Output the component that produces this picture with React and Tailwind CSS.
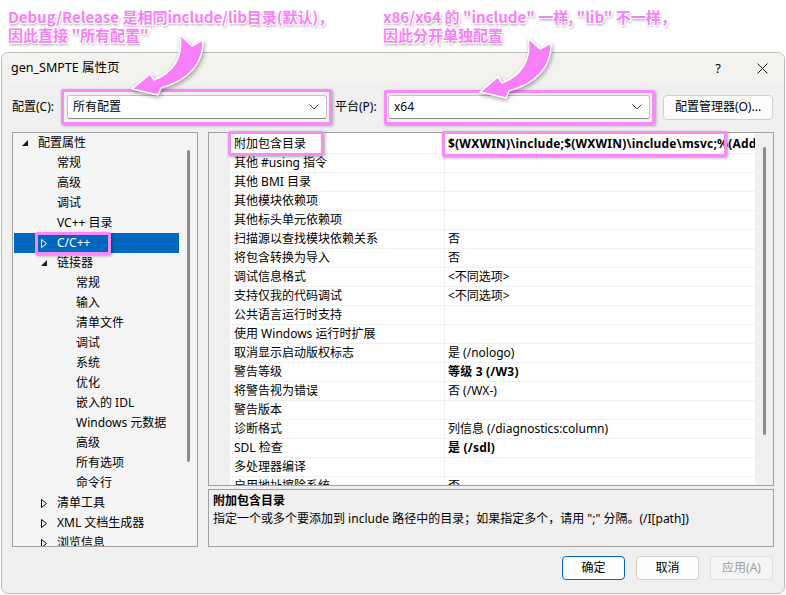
const tree = [
    { t: '配置属性', l: 0, s: 'open' },
    { t: '常规', l: 1 },
    { t: '高级', l: 1 },
    { t: '调试', l: 1 },
    { t: 'VC++ 目录', l: 1 },
    { t: 'C/C++', l: 1, s: 'closed', sel: true },
    { t: '链接器', l: 1, s: 'open' },
    { t: '常规', l: 2 },
    { t: '输入', l: 2 },
    { t: '清单文件', l: 2 },
    { t: '调试', l: 2 },
    { t: '系统', l: 2 },
    { t: '优化', l: 2 },
    { t: '嵌入的 IDL', l: 2 },
    { t: 'Windows 元数据', l: 2 },
    { t: '高级', l: 2 },
    { t: '所有选项', l: 2 },
    { t: '命令行', l: 2 },
    { t: '清单工具', l: 1, s: 'closed' },
    { t: 'XML 文档生成器', l: 1, s: 'closed' },
    { t: '浏览信息', l: 1, s: 'closed' },
];

const indent = ['pl-[8px]', 'pl-[27px]', 'pl-[46px]'];

const props = [
    ['附加包含目录', '$(WXWIN)\\include;$(WXWIN)\\include\\msvc;%(AdditionalIncludeDirectories)', true],
    ['其他 #using 指令', ''],
    ['其他 BMI 目录', ''],
    ['其他模块依赖项', ''],
    ['其他标头单元依赖项', ''],
    ['扫描源以查找模块依赖关系', '否'],
    ['将包含转换为导入', '否'],
    ['调试信息格式', '<不同选项>'],
    ['支持仅我的代码调试', '<不同选项>'],
    ['公共语言运行时支持', ''],
    ['使用 Windows 运行时扩展', ''],
    ['取消显示启动版权标志', '是 (/nologo)'],
    ['警告等级', '等级 3 (/W3)', true],
    ['将警告视为错误', '否 (/WX-)'],
    ['警告版本', ''],
    ['诊断格式', '列信息 (/diagnostics:column)'],
    ['SDL 检查', '是 (/sdl)', true],
    ['多处理器编译', ''],
    ['启用地址擦除系统', '否'],
];

function Chevron() {
    return (
        <svg width="10" height="6" viewBox="0 0 10 6" fill="none">
            <path d="M0.5 0.5l4.5 4.5 4.5-4.5" stroke="#404040" strokeWidth="1" />
        </svg>
    );
}

function Toggle({ state }) {
    if (state === 'open') {
        return (
            <svg width="6" height="6" viewBox="0 0 6 6">
                <polygon points="6,0 6,6 0,6" fill="#1a1a1a" />
            </svg>
        );
    }
    if (state === 'closed') {
        return (
            <svg width="6" height="9" viewBox="0 0 6 9" fill="none">
                <polygon points="0.5,0.5 5.5,4.5 0.5,8.5" stroke="currentColor" strokeWidth="1" />
            </svg>
        );
    }
    return null;
}

function Dropdown({ value, width }) {
    return (
        <div className={`${width} h-[24px] bg-white border border-[#c4c4c4] border-b-[#8a8a8a] rounded-[3px] flex items-center justify-between pl-[5px] pr-[7px]`}>
            <span>{value}</span>
            <Chevron />
        </div>
    );
}

function Button({ children, primary, disabled }) {
    return (
        <div
            className={`w-[63px] h-[24px] rounded-[4px] flex items-center justify-center ${
                primary
                    ? 'border border-[#0067c0] bg-[#fdfdfd]'
                    : disabled
                    ? 'border border-[#e0e0e0] bg-[#f5f5f5] text-[#a0a0a0]'
                    : 'border border-[#d0d0d0] bg-[#fdfdfd]'
            }`}
        >
            {children}
        </div>
    );
}

function PinkBox({ className }) {
    return (
        <div
            className={`absolute border-[3px] border-[#f88bf8] rounded-[2px] shadow-[1px_1px_3px_rgba(0,0,0,0.35)] pointer-events-none ${className}`}
        />
    );
}

const annotation =
    "absolute font-['Noto_Sans_CJK_SC',sans-serif] font-bold text-[15px] text-[#f77ff7] whitespace-nowrap [text-shadow:-1px_-1px_0_#fff,1px_-1px_0_#fff,-1px_1px_0_#fff,1px_1px_0_#fff,0_0_1px_#fff,1px_2px_3px_rgba(0,0,0,0.45)]";

const arrowPath =
    'M180,35 L192,46 L203,40 C204,62 190,80 161,88 L158,95 L132,89 L150,74 L154,80 C172,73 184,58 180,35 Z';

export default function App() {
    return (
        <div className="relative w-[786px] h-[595px] bg-white overflow-hidden text-[12px] text-black font-['Noto_Sans','Noto_Sans_CJK_SC',sans-serif]">
            <div className="h-[52px]" />
            <div className="ml-[1px] w-[784px] h-[542px] border border-[#bdbdbd] rounded-[7px] bg-[#f0f0f0] flex flex-col overflow-hidden">
                {/* title bar */}
                <div className="h-[31px] shrink-0 bg-[#f4f2ee] flex items-center pl-[9px]">
                    <span className="text-[12.5px]">gen_SMPTE 属性页</span>
                    <span className="ml-auto mr-[36px] text-[13px]">?</span>
                    <svg className="mr-[16px]" width="11" height="11" viewBox="0 0 11 11">
                        <path d="M0.5 0.5l10 10M10.5 0.5l-10 10" stroke="#222" strokeWidth="1" />
                    </svg>
                </div>

                {/* configuration row */}
                <div className="mt-[10px] px-[10px] h-[26px] flex items-center">
                    <span className="w-[55px]">配置(C):</span>
                    <Dropdown value="所有配置" width="w-[260px]" />
                    <span className="ml-[8px] w-[53px]">平台(P):</span>
                    <Dropdown value="x64" width="w-[262px]" />
                    <div className="ml-[13px] w-[110px] h-[25px] rounded-[4px] border border-[#d0d0d0] bg-[#fdfdfd] flex items-center justify-center">
                        配置管理器(O)...
                    </div>
                </div>

                {/* main area */}
                <div className="mt-[12px] px-[10px] h-[415px] flex gap-[10px]">
                    {/* tree */}
                    <div className="w-[186px] border border-[#a0a0a0] bg-[#f5f5f5] flex overflow-hidden">
                        <div className="ml-[1px] w-[165px] flex flex-col overflow-hidden">
                            {tree.map((n, i) => (
                                <div
                                    key={i}
                                    className={`h-[20px] shrink-0 flex items-center whitespace-nowrap ${indent[n.l]} ${
                                        n.sel ? 'bg-[#0067c0] text-white' : ''
                                    }`}
                                >
                                    <span className="w-[16px] flex items-center">
                                        <Toggle state={n.s} />
                                    </span>
                                    <span>{n.t}</span>
                                </div>
                            ))}
                        </div>
                        <div className="flex-1 pt-[17px]">
                            <div className="ml-[8px] w-[3px] h-[312px] rounded-full bg-[#8b8b8b]" />
                        </div>
                    </div>

                    {/* property grid + description */}
                    <div className="flex-1 flex flex-col gap-[3px]">
                        <div className="h-[355px] border border-[#a0a0a0] bg-white flex overflow-hidden">
                            <div className="w-[21px] bg-[#f0f0f0]" />
                            <div className="w-[525px] pt-[2px] flex flex-col overflow-hidden">
                                {props.map(([name, value, bold], i) => (
                                    <div key={i} className="h-[19px] shrink-0 flex border-b border-[#eef0f4]">
                                        <div className="w-[214px] pl-[4px] flex items-center whitespace-nowrap">
                                            {name}
                                        </div>
                                        <div
                                            className={`flex-1 border-l border-[#eef0f4] pl-[3px] flex items-center whitespace-nowrap overflow-hidden ${
                                                bold ? 'font-bold tracking-[0.2px]' : ''
                                            }`}
                                        >
                                            {value}
                                        </div>
                                    </div>
                                ))}
                            </div>
                            <div className="flex-1 bg-[#f0f0f0] pt-[14px]">
                                <div className="ml-[8px] w-[3px] h-[288px] rounded-full bg-[#8b8b8b]" />
                            </div>
                        </div>
                        <div className="h-[58px] border border-[#a0a0a0] bg-[#f0f0f0] px-[4px] pt-[2px] flex flex-col">
                            <div className="h-[18px] flex items-center font-bold">附加包含目录</div>
                            <div className="h-[18px] flex items-center whitespace-nowrap">
                                指定一个或多个要添加到 include 路径中的目录；如果指定多个，请用 ";" 分隔。(/I[path])
                            </div>
                        </div>
                    </div>
                </div>

                {/* buttons */}
                <div className="mt-[9px] px-[11px] flex justify-end gap-[11px]">
                    <Button primary>确定</Button>
                    <Button>取消</Button>
                    <Button disabled>应用(A)</Button>
                </div>
            </div>

            {/* annotations */}
            <div className={`${annotation} left-[8px] top-[8px] flex flex-col`}>
                <div className="h-[18px] leading-[18px]">Debug/Release 是相同include/lib目录(默认)，</div>
                <div className="h-[18px] leading-[18px]">因此直接 "所有配置"</div>
            </div>
            <div className={`${annotation} left-[383px] top-[8px] flex flex-col`}>
                <div className="h-[18px] leading-[18px]">x86/x64 的 "include" 一样, "lib" 不一样，</div>
                <div className="h-[18px] leading-[18px]">因此分开单独配置</div>
            </div>

            <PinkBox className="left-[61px] top-[89px] w-[271px] h-[36px]" />
            <PinkBox className="left-[384px] top-[90px] w-[271px] h-[35px]" />
            <PinkBox className="left-[35px] top-[232px] w-[76px] h-[23px]" />
            <PinkBox className="left-[228px] top-[131px] w-[96px] h-[25px]" />
            <PinkBox className="left-[442px] top-[131px] w-[285px] h-[26px]" />

            <svg
                className="absolute left-0 top-0 pointer-events-none drop-shadow-[1px_2px_2px_rgba(0,0,0,0.35)]"
                width="786"
                height="595"
                viewBox="0 0 786 595"
            >
                <path d={arrowPath} fill="#f77ff7" stroke="#fff" strokeWidth="1.5" strokeLinejoin="round" />
                <path
                    d={arrowPath}
                    transform="translate(348 3)"
                    fill="#f77ff7"
                    stroke="#fff"
                    strokeWidth="1.5"
                    strokeLinejoin="round"
                />
            </svg>
        </div>
    );
}
